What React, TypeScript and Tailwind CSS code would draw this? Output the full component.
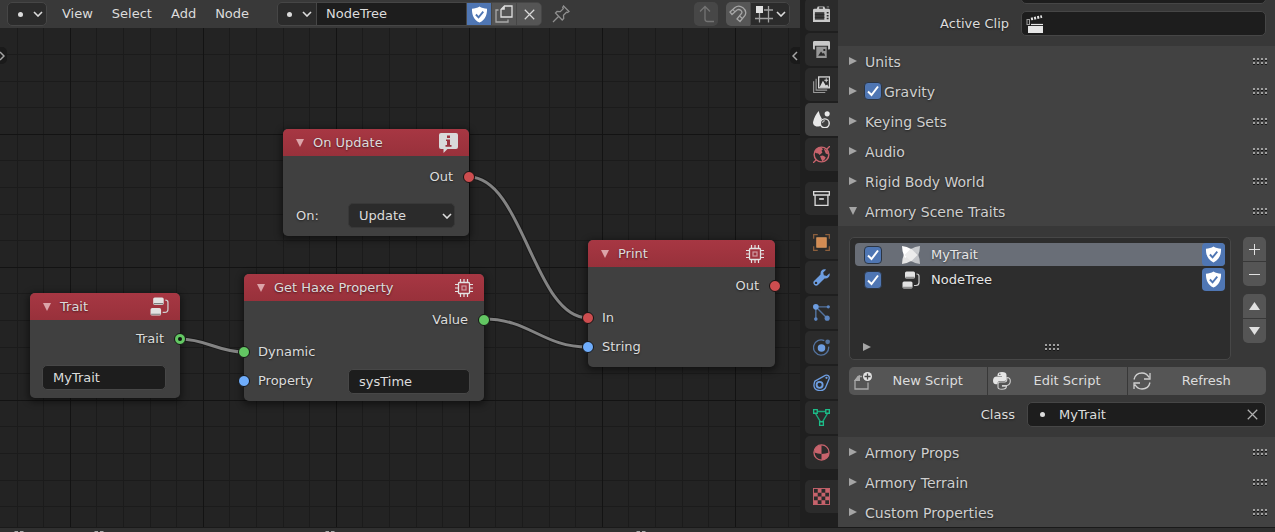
import { useId, useState } from "react";
import type { ReactNode } from "react";

type IconProps = { children: ReactNode; size?: number };

function Icon({ children, size = 17 }: IconProps) {
  return (
    <svg
      width={size}
      height={size}
      viewBox="0 0 18 18"
      fill="none"
      stroke="none"
      aria-hidden="true"
      className="shrink-0"
    >
      {children}
    </svg>
  );
}

// ---- Small glyphs ----

function ChevronDown() {
  return (
    <svg width="10" height="6" viewBox="0 0 10 6" fill="none" aria-hidden="true" className="shrink-0">
      <path d="M1 1l4 4 4-4" stroke="#dcdcdc" strokeWidth="1.6" />
    </svg>
  );
}

function Dot() {
  return <span className="size-[5px] shrink-0 rounded-full bg-[#dcdcdc]" />;
}

function Triangle({ open = false }: { open?: boolean }) {
  return (
    <svg width="8" height="8" viewBox="0 0 8 8" aria-hidden="true" className="shrink-0 fill-[#a5a5a5]">
      <path d={open ? "M0 0h8L4 8z" : "M0 0l8 4-8 4z"} />
    </svg>
  );
}

function Grip() {
  return (
    <svg width="15" height="7" viewBox="0 0 15 7" aria-hidden="true" className="shrink-0">
      {[0, 4].map((y) =>
        [0, 4, 8, 12].map((x) => (
          <g key={`${x}-${y}`}>
            <rect x={x} y={y + 1} width="2" height="2" fill="#161616" />
            <rect x={x} y={y} width="2" height="2" fill="#a0a0a0" />
          </g>
        )),
      )}
    </svg>
  );
}

function ShieldIcon() {
  return (
    <Icon>
      <path d="M9 .5C6.8 2 4 2.6 1 2.8c0 6.4 1.6 11.6 8 14.7 6.4-3.1 8-8.3 8-14.7C14 2.6 11.2 2 9 .5z" fill="#fff" />
      <path d="M5.2 9l2.8 3 5-6" stroke="#4f76b3" strokeWidth="2" />
    </Icon>
  );
}

function CrossIcon({ dim = false }: { dim?: boolean }) {
  return (
    <Icon>
      <path d="M4 4l10 10M14 4L4 14" stroke={dim ? "#b0b0b0" : "#d8d8d8"} strokeWidth="1.3" />
    </Icon>
  );
}

function CopyIcon() {
  return (
    <Icon size={18}>
      <path d="M9.5 1H17v11H6V4.5z" stroke="#e0e0e0" strokeWidth="1.3" />
      <path d="M6 4.8h3.8V1" fill="#e0e0e0" />
      <path d="M3.5 5H1v12h12v-2.5" stroke="#a8a8a8" strokeWidth="1.3" />
    </Icon>
  );
}

function PinIcon() {
  return (
    <Icon size={18}>
      <path
        d="M11.5 1L17 6.5l-1.5 1-1-.3-3 3 .2 3.3-1.5 1.5L3.5 8 5 6.5l3.3.2 3-3-.6-1.2zM6.5 11.5L1 17"
        stroke="#8f8f8f"
        strokeWidth="1.3"
      />
    </Icon>
  );
}

function ParentIcon() {
  return (
    <Icon size={18}>
      <path d="M3 6.5l5-5 5 5M8 1.5V14q0 2.5 2.5 2.5H17" stroke="#747474" strokeWidth="1.3" />
    </Icon>
  );
}

function MagnetIcon() {
  return (
    <Icon size={18}>
      <path
        d="M1 7l5-4.500C11-1.5 19 4.5 16 10.5l-5 6L8 14l4.5-5.500C14 6 10.5 3.5 8 5L3 9.5z"
        stroke="#a6a6a6"
        strokeWidth="1.3"
      />
      <path d="M10.5 11l3 2.5M4 4.5L6 7" stroke="#a6a6a6" strokeWidth="1.2" />
    </Icon>
  );
}

function SnapGridIcon() {
  return (
    <Icon size={18}>
      <path d="M0 13.5h18M9 5h9M4.5 8v9.5M13.5 1v16.5" stroke="#a2a2a2" strokeWidth="1.3" />
      <rect x="1" y="1" width="7" height="7" fill="#e0e0e0" />
    </Icon>
  );
}

function NodeTreeIcon({ size }: { size?: number }) {
  return (
    <Icon size={size}>
      <rect x="3" y="0.5" width="10" height="7" rx="1.5" fill="#e2e2e2" />
      <rect x="0.5" y="10.5" width="10" height="7" rx="1.5" fill="#e2e2e2" />
      <path d="M3.5 6.3h9M1 16.3h9" stroke="#7c7c7c" />
      <path d="M14.5 3q2.5 0 2.5 2v6.5q0 3-3 3h-2" stroke="#d0d0d0" strokeWidth="1.2" />
    </Icon>
  );
}

function ChipIcon() {
  return (
    <Icon size={18}>
      <rect x="3.5" y="3.5" width="11" height="11" rx="1" stroke="#e2e2e2" strokeWidth="1.3" />
      <rect x="7" y="7" width="4" height="4" stroke="#cf9ca2" strokeWidth="1.2" />
      <path
        d="M5.5 0v3M9 0v3M12.5 0v3M5.5 15v3M9 15v3M12.5 15v3M0 5.5h3M0 9h3M0 12.5h3M15 5.5h3M15 9h3M15 12.5h3"
        stroke="#e2e2e2"
        strokeWidth="1.2"
      />
    </Icon>
  );
}

function InfoIcon() {
  return (
    <svg width="19" height="20" viewBox="0 0 19 20" aria-hidden="true">
      <path d="M2 0h15q2 0 2 2v12q0 2-2 2H8.5l-4 4v-4H2q-2 0-2-2V2q0-2 2-2z" fill="#d9d9d9" />
      <path d="M8 2.500h3V5H8zM7 6.500h4V12h1.500v1.700h-6V12H8V8H7z" fill="#9b323d" />
    </svg>
  );
}

// Four overlapping petals around a light centre
function HaxeIcon() {
  return (
    <Icon size={18}>
      <path d="M18 0q-5 .5-9 3 1 7 6 9 3-6 3-12z" fill="#c9cbce" />
      <path d="M0 18q5-.5 9-3-1-7-6-9-3 6-3 12z" fill="#e4e4e4" />
      <path d="M18 18q-5-.5-9-3 1-7 6-9 3 6 3 12z" fill="#c2c4c8" />
      <path d="M0 0q5 .5 9 3-1 7-6 9Q0 6 0 0z" fill="#fff" />
      <path d="M9 2.5L15.5 9 9 15.5 2.5 9z" fill="#ececec" />
    </Icon>
  );
}

function NewFileIcon() {
  return (
    <Icon size={18}>
      <path d="M8 4.5H5.5L1 8.5V17h13v-6.5" stroke="#a9a9a9" strokeWidth="1.3" />
      <path d="M6 3v6H0l3.5-5z" fill="#a9a9a9" />
      <circle cx="13.5" cy="4.5" r="4.5" fill="#e4e4e4" />
      <path d="M13.5 1.5v6M10.5 4.5h6" stroke="#4a4a4a" strokeWidth="1.3" />
    </Icon>
  );
}

function PythonIcon() {
  return (
    <Icon size={18}>
      <path d="M4.5 3Q4.5 0 9 0t4.5 3v4q0 2-2 2H7q-2.5 0-2.5 3Q0 13 0 8.8T4 4.5h5V4H4.5z" fill="#e4e4e4" />
      <path
        d="M13.8 5.5q3.5 0 3.5 3.5T14 13.5H9.5v.8h4q0 3-4.5 3t-4-2.8V12q0-2 2.2-2h4.5q2.1 0 2.1-2.5z"
        stroke="#d0d0d0"
        strokeWidth="1.1"
      />
      <circle cx="6.8" cy="2.3" r="0.8" fill="#565656" />
    </Icon>
  );
}

function RefreshIcon() {
  return (
    <Icon size={18}>
      <path d="M1 7.5C2 3 5 1 9 1c3 0 5.5 1.5 7 4.5M17 1v6h-6" stroke="#d0d0d0" strokeWidth="1.3" />
      <path d="M17 10.5C16 15 13 17 9 17c-3 0-5.5-1.5-7-4.5M1 17v-6h6" stroke="#d0d0d0" strokeWidth="1.3" />
    </Icon>
  );
}

function ClipIcon() {
  return (
    <Icon size={18}>
      <path d="M2 11h15v7H2z" fill="#e6e6e6" />
      <path d="M5 9.5h12" stroke="#e6e6e6" strokeWidth="1.2" />
      <rect x="1" y="4.5" width="2.5" height="5" stroke="#9d9d9d" />
      <path d="M5 4l11-2.5" stroke="#e6e6e6" strokeWidth="2.8" strokeDasharray="2 1.2" />
    </Icon>
  );
}

// ---- Property tab icons ----

const tabGroups: { label: string; active?: boolean; icon: ReactNode }[][] = [
  [
    {
      label: "Render",
      icon: (
        <>
          <path d="M0 4.5Q0 3 1.5 3H4L5 .5h7L13 3h3.500Q18 3 18 4.500V17H0z" fill="#c9c9c9" />
          <path d="M2 6.5h10v8H2z" fill="#3b3b3b" />
          <path d="M2 9.2h10M2 12h10" stroke="#252525" />
          <path d="M6.5 2.2h4M14.5 7.2h2M14.5 10.2h2M14.5 13.2h2" stroke="#2d2d2d" strokeWidth="1.6" />
          <path d="M14.5 1H17" stroke="#909090" />
        </>
      ),
    },
    {
      label: "Output",
      icon: (
        <>
          <path d="M1.5 0h15Q18 0 18 1.500V8q0 1-1 1h-1V5H2v4H1Q0 9 0 8V1.500Q0 0 1.500 0z" fill="#c9c9c9" />
          <path d="M3.5 6h11v12h-11z" fill="#969696" />
          <path d="M5.5 15.5l3-4.500 2 2.500 1-1 1.500 3zM11 8.500h2v2h-2z" fill="#292929" />
        </>
      ),
    },
    {
      label: "View Layer",
      icon: (
        <>
          <rect x="6" y="1" width="11.5" height="11.5" stroke="#d6d6d6" strokeWidth="1.4" />
          <path d="M7 12l3.500-7 3 5 1.500-1 2 3zM13.500 2.500h1v1.500H16v1h-1.500v1.500h-1V5H12V4h1.500z" fill="#d6d6d6" />
          <path d="M3.3 3v12H15M.7 5.5v12H13" stroke="#999" strokeWidth="1.2" />
        </>
      ),
    },
    {
      label: "Scene",
      active: true,
      icon: (
        <>
          <path d="M6 0q1 5 3.500 8.500Q7 11 8.500 16q-2 .8-5 .3Q0 15.500 0 12 1.500 5 6 0z" fill="#e8e8e8" />
          <circle cx="15" cy="3" r="2.7" fill="#e8e8e8" />
          <circle cx="12.5" cy="13" r="4.7" stroke="#e8e8e8" strokeWidth="1.5" />
          <path d="M10 12.500q.5-2 2.500-2.300" stroke="#bcbcbc" strokeWidth="1.2" />
        </>
      ),
    },
    {
      label: "World",
      icon: (
        <>
          <circle cx="9" cy="9" r="7.8" stroke="#c7636c" strokeWidth="1.5" />
          <path
            d="M2 5q3-4 7-3.500l1.500 2L9 5l1 2-3 2.500L5.500 8l-3-.5zM7.500 10.500l3-.5 3 2-1 2-2.500 2.500-1.500-3zM11.500 3l4 2 .5 4-2.500-1-1-2.500z"
            fill="#c7636c"
          />
          <path d="M14.5 3.5L18 0M0 18l3.5-3.5" stroke="#c7636c" strokeWidth="1.4" />
        </>
      ),
    },
  ],
  [
    {
      label: "Collection",
      icon: (
        <>
          <path d="M.7 1.7h16.6v3.6H.7zM2.2 5.3h13.6v11H2.2z" stroke="#dadada" strokeWidth="1.4" />
          <path d="M6.5 9.5h5" stroke="#dadada" strokeWidth="1.8" />
        </>
      ),
    },
  ],
  [
    {
      label: "Object",
      icon: (
        <>
          <rect x="4" y="4" width="10" height="10" fill="#d28b53" stroke="#d9985f" />
          <path d="M.7 5V.7H5M13 .7h4.3V5M17.3 13v4.3H13M5 17.3H.7V13" stroke="#8d5f3c" strokeWidth="1.3" />
        </>
      ),
    },
    {
      label: "Modifiers",
      icon: (
        <path
          d="M17.5 4.5l-3 3-3-.8-.7-3 3-3C10.5-.5 7.500 2 8 5.800L.8 13C-1 15.500 2.500 19 5 17.200L12.200 10c3.800.5 6.300-2.500 5.300-5.500zM3.200 16a1.300 1.300 0 1 1 0-2.600 1.300 1.300 0 0 1 0 2.600z"
          fill="#6d9de0"
        />
      ),
    },
    {
      label: "Particles",
      icon: (
        <>
          <path d="M4 3h12M3 4v12M4 4l11 11" stroke="#53739f" strokeWidth="1.5" />
          <circle cx="3" cy="3" r="3" fill="#6d9de0" />
          <circle cx="16.2" cy="3" r="1.7" fill="#5c85c0" />
          <circle cx="3" cy="16" r="1.9" fill="#5c85c0" />
          <circle cx="15" cy="15" r="2.7" fill="#5c85c0" />
        </>
      ),
    },
    {
      label: "Physics",
      icon: (
        <>
          <path d="M12 1.8A8 8 0 1 0 16.5 8" stroke="#53739f" strokeWidth="1.4" />
          <circle cx="9" cy="9.5" r="4" fill="#6d9de0" />
          <circle cx="15.5" cy="3" r="2.5" fill="#53739f" />
        </>
      ),
    },
    {
      label: "Constraints",
      icon: (
        <>
          <path d="M2 7.5l11-6c2.500-1 5 1 4 3.800L13 15c-2.500 4-12 3.500-12-3 0-1.600.5-3 1-4.500z" stroke="#6d9de0" strokeWidth="1.4" />
          <circle cx="7" cy="11.5" r="3.2" stroke="#6d9de0" strokeWidth="2" />
          <circle cx="14.3" cy="4" r="1.2" fill="#6d9de0" />
        </>
      ),
    },
    {
      label: "Object Data",
      icon: (
        <>
          <path d="M2.5 4.5l6.5 11 6.5-11M4 2.7h10" stroke="#19a97b" strokeWidth="1.5" />
          <path d="M.7 .7h3.8v3.8H.7zM13.5 .7h3.8v3.8h-3.8zM7 13.5h4v3.8H7z" fill="#2b2b2b" stroke="#1dbd89" strokeWidth="1.4" />
        </>
      ),
    },
    {
      label: "Material",
      icon: (
        <>
          <circle cx="9" cy="9" r="8" stroke="#c7636c" strokeWidth="1.4" />
          <path d="M9 1v9.500q-4 0-7.700-1.500Q1.500 1.500 9 1zM9 10.500q4.500 0 8-1.500-.5 8-8 8z" fill="#c7636c" />
        </>
      ),
    },
  ],
  [
    {
      label: "Texture",
      icon: (
        <>
          <rect x="0.5" y="0.5" width="17" height="17" fill="#2b2b2b" stroke="#c7636c" />
          <path
            d="M5 1h4v4H5zM13 1h4v4h-4zM1 5h4v4H1zM9 5h4v4H9zM5 9h4v4H5zM13 9h4v4h-4zM1 13h4v4H1zM9 13h4v4H9z"
            fill="#c7636c"
          />
        </>
      ),
    },
  ],
];

// ---- Form controls ----

function Checkbox({ label }: { label: string }) {
  return (
    <span className="relative grid size-[18px] shrink-0 place-items-center">
      <input
        type="checkbox"
        defaultChecked
        aria-label={label}
        className="peer size-[18px] appearance-none rounded-[4px] border border-[#2c3542] bg-[#5a5a5a] checked:bg-[#4f76b3]"
      />
      <svg
        width="12"
        height="12"
        viewBox="0 0 12 12"
        fill="none"
        aria-hidden="true"
        className="pointer-events-none absolute hidden peer-checked:block"
      >
        <path d="M1 6.5L4.5 10 11 1.5" stroke="#fff" strokeWidth="2" />
      </svg>
    </span>
  );
}

// ---- Nodes ----

type SocketColor = "red" | "green" | "blue";

const socketColors: Record<SocketColor, string> = {
  red: "bg-[#cd4d4f]",
  green: "bg-[#63c763]",
  blue: "bg-[#6fadfc]",
};

function Socket({ color, side, ring }: { color: SocketColor; side: "in" | "out"; ring?: boolean }) {
  return (
    <span
      className={`absolute top-1.5 grid size-3 place-items-center rounded-full border border-[#141414] ${socketColors[color]} ${
        side === "in" ? "-left-1.5" : "-right-1.5"
      }`}
    >
      {ring && <span className="size-1 rounded-full bg-[#101010]" />}
    </span>
  );
}

type NodeProps = {
  title: string;
  icon: ReactNode;
  className: string;
  children: ReactNode;
};

function NodeBox({ title, icon, className, children }: NodeProps) {
  return (
    <section className={`absolute rounded-[5px] bg-[#424242]/95 shadow-[0_2px_7px_2px_rgba(0,0,0,0.45)] ${className}`}>
      <header className="flex h-[27px] items-center rounded-t-[5px] bg-linear-to-b from-[#a73743] to-[#98313b] pr-[11px] pl-[13px]">
        <svg width="8" height="8" viewBox="0 0 8 8" aria-hidden="true" className="mr-[9px] fill-[#dca4a9]">
          <path d="M0 0h8L4 8z" />
        </svg>
        <h2 className="flex-1">{title}</h2>
        {icon}
      </header>
      <div className="pt-[7px] pb-2">{children}</div>
    </section>
  );
}

function OutputRow({ label, color, ring }: { label: string; color: SocketColor; ring?: boolean }) {
  return (
    <div className="relative flex h-6 items-center justify-end pr-4">
      {label}
      <Socket color={color} side="out" ring={ring} />
    </div>
  );
}

const fieldClass =
  "h-[25px] min-w-0 rounded-[5px] border border-[#474747] bg-[#1d1d1d] px-[10px] outline-none";

function NodeCanvas() {
  return (
    <div className="relative min-h-0 flex-1 overflow-hidden bg-[#232323]">
      <svg className="absolute inset-0 size-full" aria-hidden="true">
        <defs>
          <pattern id="grid" x="70" y="106" width="133" height="133" patternUnits="userSpaceOnUse">
            {[26, 53, 80, 106].map((n) => (
              <path key={n} d={`M${n} 0h1v133h-1zM0 ${n}h133v1H0z`} fill="#1b1b1b" />
            ))}
            <path d="M0 0h1v133H0zM0 0h133v1H0z" fill="#131313" />
          </pattern>
        </defs>
        <rect width="100%" height="100%" fill="url(#grid)" />
        {[
          "M469 149C523 149 534 290 588 290",
          "M180 311C206 311 218 324 244 324",
          "M484 291C530 291 542 319 588 319",
        ].map((d) => (
          <g key={d} fill="none">
            <path d={d} stroke="#191919" strokeWidth="5" />
            <path d={d} stroke="#838383" strokeWidth="3" />
          </g>
        ))}
      </svg>

      <NodeBox title="On Update" icon={<InfoIcon />} className="top-[101px] left-[283px] w-[186px]">
        <div className="pt-0.5">
          <OutputRow label="Out" color="red" />
        </div>
        <div className="mt-[14px] flex items-center justify-between pr-[14px] pl-[13px]">
          <label htmlFor="on-event">On:</label>
          <span className="relative flex items-center">
            <select
              id="on-event"
              className="h-[25px] w-[107px] appearance-none rounded-[5px] border border-[#383838] bg-[#2b2b2b] px-[10px] outline-none"
            >
              <option>Update</option>
              <option>Late Update</option>
              <option>Physics Pre-Update</option>
            </select>
            <span className="pointer-events-none absolute right-[3px]">
              <ChevronDown />
            </span>
          </span>
        </div>
      </NodeBox>

      <NodeBox title="Trait" icon={<NodeTreeIcon size={19} />} className="top-[265px] left-[30px] w-[150px]">
        <OutputRow label="Trait" color="green" ring />
        <div className="mt-[14px] flex pr-[14px] pl-3">
          <input aria-label="Trait name" defaultValue="MyTrait" className={`flex-1 ${fieldClass}`} />
        </div>
      </NodeBox>

      <NodeBox title="Get Haxe Property" icon={<ChipIcon />} className="top-[246px] left-[244px] w-[240px]">
        <OutputRow label="Value" color="green" />
        <div className="relative mt-2 flex h-6 items-center pl-[14px]">
          Dynamic
          <Socket color="green" side="in" />
        </div>
        <div className="relative mt-[5px] flex h-6 items-center justify-between pr-[14px] pl-[14px]">
          <label htmlFor="haxe-property">Property</label>
          <input id="haxe-property" defaultValue="sysTime" className={`w-[122px] ${fieldClass}`} />
          <Socket color="blue" side="in" />
        </div>
      </NodeBox>

      <NodeBox title="Print" icon={<ChipIcon />} className="top-[212px] left-[588px] w-[187px]">
        <OutputRow label="Out" color="red" />
        <div className="relative mt-2 flex h-6 items-center pl-[14px]">
          In
          <Socket color="red" side="in" />
        </div>
        <div className="relative mt-[5px] flex h-6 items-center pl-[14px]">
          String
          <Socket color="blue" side="in" />
        </div>
      </NodeBox>

      {/* Handles that bring back the hidden side regions */}
      <button aria-label="Show toolbar" className="absolute top-[19px] left-0 h-[17px] w-[7px] rounded-r-[5px] bg-[#1a1a1a]">
        <svg width="5" height="10" viewBox="0 0 5 10" fill="none" aria-hidden="true">
          <path d="M0 1l4 4-4 4" stroke="#a5a5a5" strokeWidth="1.5" />
        </svg>
      </button>
      <button
        aria-label="Show sidebar"
        className="absolute top-[19px] right-0 grid h-[17px] w-[10px] place-items-center rounded-l-[5px] bg-[#1a1a1a]"
      >
        <svg width="6" height="10" viewBox="0 0 6 10" fill="none" aria-hidden="true">
          <path d="M5 1L1 5l4 4" stroke="#a5a5a5" strokeWidth="1.5" />
        </svg>
      </button>
    </div>
  );
}

function NodeHeader() {
  return (
    <header className="flex h-7 shrink-0 items-center bg-[#393939] pr-[10px] pl-[7px]">
      <button
        aria-label="Editor type"
        className="flex h-6 w-10 shrink-0 items-center justify-end gap-[10px] rounded-[5px] border border-[#464646] bg-[#2b2b2b] pr-[3px]"
      >
        <Dot />
        <ChevronDown />
      </button>
      <nav className="ml-[15px] flex gap-[19px]">
        <button>View</button>
        <button>Select</button>
        <button>Add</button>
        <button>Node</button>
      </nav>
      <div className="ml-7 flex h-6 overflow-hidden rounded-[5px] border border-[#464646] bg-[#464646]">
        <button aria-label="Browse node tree" className="flex w-[38px] items-center justify-end gap-[10px] bg-[#2b2b2b] pr-1">
          <Dot />
          <ChevronDown />
        </button>
        <input
          aria-label="Node tree name"
          defaultValue="NodeTree"
          className="ml-px w-[149px] bg-[#1d1d1d] px-[9px] outline-none"
        />
        <button aria-label="Fake user" className="ml-px grid w-6 place-items-center bg-[#4f76b3]">
          <ShieldIcon />
        </button>
        <button aria-label="New node tree" className="ml-px grid w-6 place-items-center bg-[#555]">
          <CopyIcon />
        </button>
        <button aria-label="Unlink node tree" className="ml-px grid w-6 place-items-center bg-[#555]">
          <CrossIcon />
        </button>
      </div>
      <button aria-label="Pin" className="ml-[10px]">
        <PinIcon />
      </button>
      <div className="ml-auto flex gap-2">
        <button aria-label="Parent node tree" className="grid size-6 place-items-center rounded-[5px] bg-[#474747]">
          <ParentIcon />
        </button>
        <div className="flex h-6 overflow-hidden rounded-[5px]">
          <button aria-label="Snap" className="grid w-6 place-items-center bg-[#565656]">
            <MagnetIcon />
          </button>
          <button
            aria-label="Snap element"
            className="flex w-10 items-center justify-between rounded-r-[5px] border border-[#464646] bg-[#2b2b2b] pr-[3px] pl-1"
          >
            <SnapGridIcon />
            <ChevronDown />
          </button>
        </div>
      </div>
    </header>
  );
}

// ---- Properties editor ----

function PropertyTabs() {
  return (
    <nav className="-mt-0.5 flex w-[33px] shrink-0 flex-col gap-[11px]">
      {tabGroups.map((group) => (
        <div key={group[0].label} className="flex flex-col gap-0.5">
          {group.map((tab) => (
            <button
              key={tab.label}
              aria-label={tab.label}
              className={`grid h-[33px] place-items-center rounded-l-[5px] ${tab.active ? "bg-[#424242]" : "bg-[#2b2b2b]"}`}
            >
              <Icon>{tab.icon}</Icon>
            </button>
          ))}
        </div>
      ))}
    </nav>
  );
}

function PanelHeader({ title, open, checkbox }: { title: string; open?: boolean; checkbox?: boolean }) {
  return (
    <div className="flex h-[30px] items-center bg-[#424242] pr-[7px] pl-[11px] text-[14px] text-[#cfcfcf]">
      <Triangle open={open} />
      {checkbox && (
        <span className="ml-[7px] flex">
          <Checkbox label={title} />
        </span>
      )}
      <h2 className={`flex-1 pt-0.5 ${checkbox ? "ml-0.5" : "ml-2"}`}>{title}</h2>
      <Grip />
    </div>
  );
}

const traits = [
  { name: "MyTrait", icon: <HaxeIcon /> },
  { name: "NodeTree", icon: <NodeTreeIcon size={18} /> },
];

function TraitList() {
  const [selected, setSelected] = useState("MyTrait");

  return (
    <div className="flex gap-3">
      <div className="flex h-[123px] min-w-0 flex-1 flex-col rounded-[5px] border border-[#474747] bg-[#2d2d2d] px-[5px] pt-[5px] pb-2">
        <ul className="flex flex-1 flex-col gap-0.5">
          {traits.map((trait) => (
            <li
              key={trait.name}
              onClick={() => setSelected(trait.name)}
              className={`flex h-[23px] items-center rounded-[4px] pl-[9px] ${
                selected === trait.name ? "bg-[#696e77]" : ""
              }`}
            >
              <Checkbox label={`Enable ${trait.name}`} />
              <span className="ml-5">{trait.icon}</span>
              <span className="ml-[11px] flex-1 text-[#e6e6e6]">{trait.name}</span>
              <button
                aria-label={`Fake user for ${trait.name}`}
                className="grid size-[23px] place-items-center rounded-[4px] bg-[#4f76b3]"
              >
                <ShieldIcon />
              </button>
            </li>
          ))}
        </ul>
        <div className="flex items-center pl-2">
          <Triangle />
          <span className="flex flex-1 justify-center pl-2">
            <Grip />
          </span>
        </div>
      </div>

      <div className="flex w-[23px] flex-col gap-2 fill-[#e0e0e0]">
        <div className="flex flex-col gap-px overflow-hidden rounded-[5px]">
          <button aria-label="Add trait" className="grid h-6 place-items-center bg-[#555]">
            <svg width="11" height="11" viewBox="0 0 11 11" aria-hidden="true">
              <path d="M5 0h1v5h5v1H6v5H5V6H0V5h5z" />
            </svg>
          </button>
          <button aria-label="Remove trait" className="grid h-6 place-items-center bg-[#555]">
            <svg width="11" height="11" viewBox="0 0 11 11" aria-hidden="true">
              <path d="M0 5h11v1H0z" />
            </svg>
          </button>
        </div>
        <div className="flex flex-col gap-px overflow-hidden rounded-[5px]">
          <button aria-label="Move up" className="grid h-6 place-items-center bg-[#555]">
            <svg width="11" height="8" viewBox="0 0 11 8" aria-hidden="true">
              <path d="M5.5 0L11 8H0z" />
            </svg>
          </button>
          <button aria-label="Move down" className="grid h-6 place-items-center bg-[#555]">
            <svg width="11" height="8" viewBox="0 0 11 8" aria-hidden="true">
              <path d="M0 0h11L5.5 8z" />
            </svg>
          </button>
        </div>
      </div>
    </div>
  );
}

const scriptActions = [
  { label: "New Script", icon: <NewFileIcon /> },
  { label: "Edit Script", icon: <PythonIcon /> },
  { label: "Refresh", icon: <RefreshIcon /> },
];

function PropertiesPanel() {
  const clipId = useId();
  const classId = useId();

  return (
    <div className="flex min-w-0 flex-1 flex-col">
      {/* Scrolled so that only the end of the Scene panel shows */}
      <div className="flex h-[46px] shrink-0 flex-col justify-end gap-[7px] overflow-hidden bg-[#383838] pr-[9px] pb-[10px]">
        <div className="flex shrink-0 justify-end">
          <input aria-label="Background Scene" className="h-6 w-[245px] rounded-[5px] border border-[#464646] bg-[#1d1d1d]" />
        </div>
        <div className="flex shrink-0 items-center justify-end gap-3">
          <label htmlFor={clipId}>Active Clip</label>
          <span className="flex h-[25px] w-[245px] items-center rounded-[5px] border border-[#464646] bg-[#1d1d1d] pl-1">
            <ClipIcon />
            <input id={clipId} className="min-w-0 flex-1 bg-transparent px-2 outline-none" />
          </span>
        </div>
      </div>

      <PanelHeader title="Units" />
      <PanelHeader title="Gravity" checkbox />
      <PanelHeader title="Keying Sets" />
      <PanelHeader title="Audio" />
      <PanelHeader title="Rigid Body World" />
      <PanelHeader title="Armory Scene Traits" open />

      <div className="bg-[#383838] pt-[11px] pr-[9px] pb-[10px] pl-[11px]">
        <TraitList />
        <div className="mt-[7px] grid grid-cols-3 gap-px overflow-hidden rounded-[5px]">
          {scriptActions.map((action) => (
            <button key={action.label} className="flex h-7 items-center bg-[#555] pl-[5px]">
              {action.icon}
              <span className="flex-1 pr-1 text-center">{action.label}</span>
            </button>
          ))}
        </div>
        <div className="mt-[7px] flex items-center justify-end gap-3">
          <label htmlFor={classId}>Class</label>
          <span className="flex h-[25px] w-[239px] items-center rounded-[5px] border border-[#464646] bg-[#1d1d1d] pr-1 pl-3">
            <Dot />
            <input id={classId} defaultValue="MyTrait" className="ml-[14px] min-w-0 flex-1 bg-transparent outline-none" />
            <button aria-label="Clear class">
              <CrossIcon dim />
            </button>
          </span>
        </div>
      </div>

      <PanelHeader title="Armory Props" />
      <PanelHeader title="Armory Terrain" />
      <PanelHeader title="Custom Properties" />
    </div>
  );
}

// ---- Status bar ----

function MouseIcon() {
  return (
    <svg width="10" height="14" viewBox="0 0 10 14" aria-hidden="true" className="shrink-0 fill-[#a8a8a8]">
      <path d="M1 0h3v6H0V1zM6 0h3l1 1v5H6zM0 7h10v3q0 4-5 4t-5-4z" />
    </svg>
  );
}

function StatusBar() {
  return (
    <footer className="h-[5px] shrink-0 overflow-hidden border-t border-[#1a1a1a] bg-[#303030] pt-[3px] pl-[14px]">
      <div className="flex">
        <span className="w-20">
          <MouseIcon />
        </span>
        <span className="w-[231px]">
          <MouseIcon />
        </span>
        <span className="w-[311px]">
          <MouseIcon />
        </span>
        <MouseIcon />
      </div>
    </footer>
  );
}

export default function App() {
  return (
    <div className="flex h-screen flex-col overflow-hidden bg-[#1f1f1f] font-['DejaVu_Sans',sans-serif] text-[13px] text-[#dcdcdc] [text-shadow:0_1px_2px_rgba(0,0,0,0.5)]">
      <div className="flex min-h-0 flex-1 gap-[5px] overflow-hidden">
        <main className="flex min-w-0 flex-1 flex-col">
          <NodeHeader />
          <NodeCanvas />
        </main>
        <aside className="flex w-[470px] shrink-0 overflow-hidden">
          <PropertyTabs />
          <PropertiesPanel />
        </aside>
      </div>
      <StatusBar />
    </div>
  );
}
